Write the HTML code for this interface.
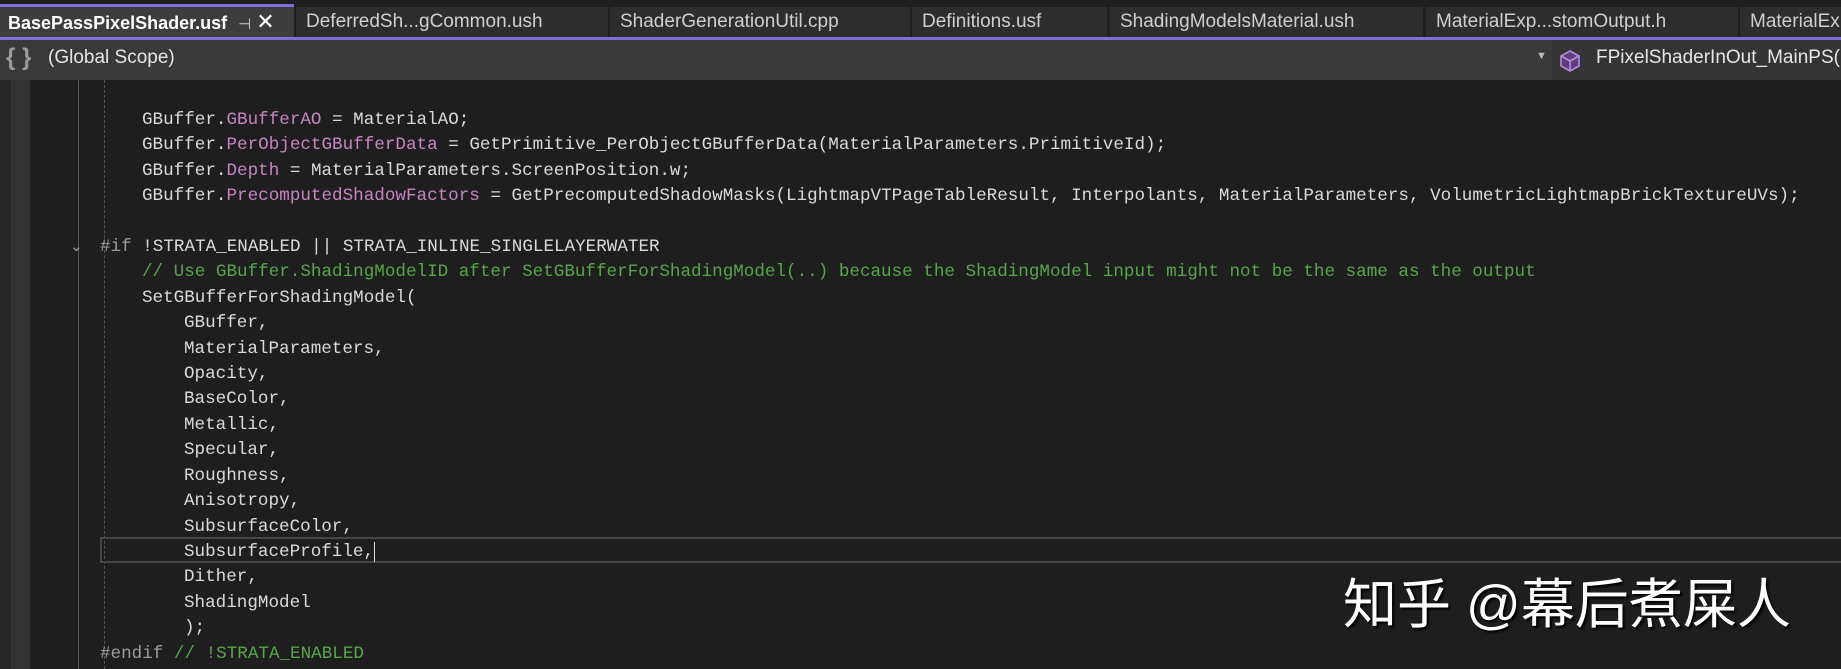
<!DOCTYPE html>
<html><head><meta charset="utf-8"><style>
*{margin:0;padding:0;box-sizing:border-box}
body{width:1841px;height:669px;background:#1e1e1e;overflow:hidden;position:relative;font-family:"Liberation Sans",sans-serif}
.tabs{position:absolute;left:0;top:0;width:1841px;height:40px;background:#1f1f1f}
.tab{position:absolute;top:7px;height:30px;background:#2d2d2d;color:#cfcfcf;font-size:19px;line-height:30px;padding-left:10px;white-space:nowrap;overflow:hidden}
.act{background:#3d3d3d;color:#fff;font-weight:bold;font-size:18px;top:4px;height:33px;border-top:3px solid #7f6fd8;line-height:29px;padding-left:8px}
.pl{position:absolute;left:0;top:37px;width:1841px;height:3px;background:#7f6fd8}
.bar{position:absolute;left:0;top:40px;width:1841px;height:40px;background:#393939}
.code{position:absolute;left:0;top:80px;width:1841px;height:589px}
.ln{position:absolute;height:25.4px;line-height:25.4px;font-family:"Liberation Mono",monospace;font-size:17.6px;color:#dadada;white-space:pre}
.p{color:#c586c0}.c{color:#57a64a}.g{color:#9b9b9b}
</style></head><body>
<div class="tabs">
<div class="tab act" style="left:0;width:294px">BasePassPixelShader.usf <span style="font-weight:normal;color:#ccc;font-size:15px;margin-left:6px">⊣</span> <span style="font-weight:normal;font-size:22px">✕</span></div>
<div class="tab" style="left:296px;width:312px">DeferredSh...gCommon.ush</div>
<div class="tab" style="left:610px;width:300px">ShaderGenerationUtil.cpp</div>
<div class="tab" style="left:912px;width:195px">Definitions.usf</div>
<div class="tab" style="left:1110px;width:313px">ShadingModelsMaterial.ush</div>
<div class="tab" style="left:1426px;width:312px">MaterialExp...stomOutput.h</div>
<div class="tab" style="left:1740px;width:101px">MaterialEx</div>
</div>
<div class="pl"></div>
<div class="bar">
<div style="position:absolute;left:6px;top:4px;color:#9a9a9a;font-size:24px;font-weight:bold">{ }</div>
<div style="position:absolute;left:48px;top:7px;color:#e6e6e6;font-size:19px">(Global Scope)</div>
<div style="position:absolute;left:1536px;top:10px;color:#bbb;font-size:11px">▼</div>
<div style="position:absolute;left:1552px;top:0;width:289px;height:40px;background:#343434"></div>
<svg style="position:absolute;left:1558px;top:9px" width="24" height="24" viewBox="0 0 24 24"><path d="M12 2 L21 7 L21 17 L12 22 L3 17 L3 7Z M12 12 L12 22 M12 12 L3 7 M12 12 L21 7" fill="#5a3f7a" stroke="#b78be0" stroke-width="1.6"/></svg>
<div style="position:absolute;left:1596px;top:7px;color:#e6e6e6;font-size:19px;white-space:nowrap">FPixelShaderInOut_MainPS([</div>
</div>
<div class="code">
<div style="position:absolute;left:0;top:0;width:11px;height:589px;background:#262626"></div>
<div style="position:absolute;left:11px;top:0;width:19px;height:589px;background:#333"></div>
<div style="position:absolute;left:78px;top:0;width:1px;height:589px;background:#555"></div>
<div style="position:absolute;left:104px;top:0;width:0;height:589px;border-left:1px dashed #555"></div>
<div style="position:absolute;left:100px;top:457px;width:1741px;height:26px;border:2px solid #464646;border-right:none"></div>
<div class="ln" style="left:142px;top:28px">GBuffer.<span class="p">GBufferAO</span> = MaterialAO;</div>
<div class="ln" style="left:142px;top:53px">GBuffer.<span class="p">PerObjectGBufferData</span> = GetPrimitive_PerObjectGBufferData(MaterialParameters.PrimitiveId);</div>
<div class="ln" style="left:142px;top:79px">GBuffer.<span class="p">Depth</span> = MaterialParameters.ScreenPosition.w;</div>
<div class="ln" style="left:142px;top:104px">GBuffer.<span class="p">PrecomputedShadowFactors</span> = GetPrecomputedShadowMasks(LightmapVTPageTableResult, Interpolants, MaterialParameters, VolumetricLightmapBrickTextureUVs);</div>
<div class="ln g" style="left:70px;top:155px;font-size:15px">⌄</div>
<div class="ln" style="left:100px;top:155px"><span class="g">#if</span> !STRATA_ENABLED || STRATA_INLINE_SINGLELAYERWATER</div>
<div class="ln c" style="left:142px;top:180px">// Use GBuffer.ShadingModelID after SetGBufferForShadingModel(..) because the ShadingModel input might not be the same as the output</div>
<div class="ln" style="left:142px;top:206px">SetGBufferForShadingModel(</div>
<div class="ln" style="left:184px;top:231px">GBuffer,</div>
<div class="ln" style="left:184px;top:257px">MaterialParameters,</div>
<div class="ln" style="left:184px;top:282px">Opacity,</div>
<div class="ln" style="left:184px;top:307px">BaseColor,</div>
<div class="ln" style="left:184px;top:333px">Metallic,</div>
<div class="ln" style="left:184px;top:358px">Specular,</div>
<div class="ln" style="left:184px;top:384px">Roughness,</div>
<div class="ln" style="left:184px;top:409px">Anisotropy,</div>
<div class="ln" style="left:184px;top:435px">SubsurfaceColor,</div>
<div class="ln" style="left:184px;top:460px">SubsurfaceProfile,<span style="border-left:1.5px solid #ddd"></span></div>
<div class="ln" style="left:184px;top:485px">Dither,</div>
<div class="ln" style="left:184px;top:511px">ShadingModel</div>
<div class="ln" style="left:184px;top:536px">);</div>
<div class="ln" style="left:100px;top:562px"><span class="g">#endif</span> <span class="c">// !STRATA_ENABLED</span></div>
</div>
<div style="position:absolute;left:1343px;top:560px;color:#fff;font-size:54px;font-family:'Liberation Sans','Noto Sans CJK SC',sans-serif;white-space:nowrap;text-shadow:2px 2px 2px #000">知乎 @幕后煮屎人</div>
</body></html>
